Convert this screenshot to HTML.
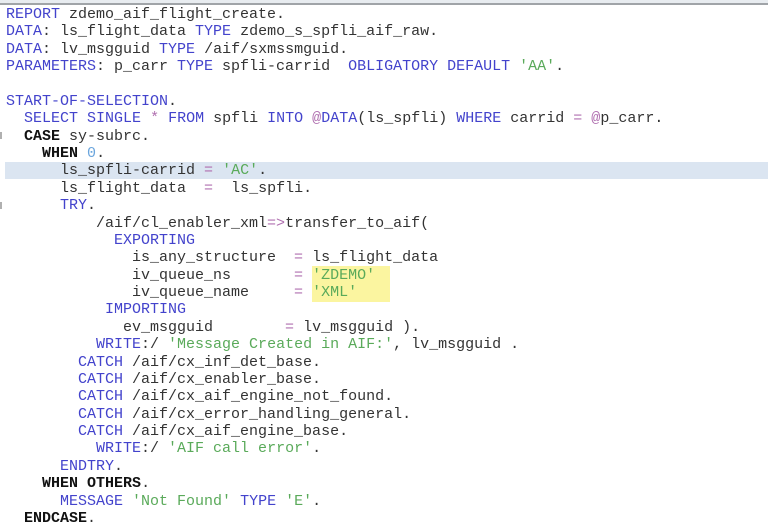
<!DOCTYPE html>
<html><head><meta charset="utf-8"><style>
html,body{margin:0;padding:0;background:#fff;}
body{width:768px;height:530px;overflow:hidden;position:relative;}
.top{position:absolute;left:0;top:0;width:768px;height:3px;background:#e8ecf0;border-bottom:2px solid #a0a4a8;}
pre{position:absolute;left:6px;top:6px;margin:0;font-family:"Liberation Mono",monospace;font-size:15px;line-height:17.38px;color:#333;letter-spacing:0;}
.k{color:#4343cc}
.s{color:#5aaa5a}
.o{color:#b070b0;font-weight:normal}
.n{color:#6aa5dd}
.b{font-weight:bold;color:#111}
.hl{position:absolute;left:5px;top:162px;width:763px;height:17px;background:#dbe5f1;}
.y1{position:absolute;left:312px;top:266px;width:78px;height:36px;background:#fbf5a0;}
.m{position:absolute;left:0;width:2px;height:7px;background:#b0b0b0;}
</style></head><body>
<div class="top"></div>
<div class="hl"></div>
<div class="y1"></div>
<div class="m" style="top:132px"></div>
<div class="m" style="top:202px"></div>
<pre><span class="k">REPORT</span> zdemo_aif_flight_create.
<span class="k">DATA</span>: ls_flight_data <span class="k">TYPE</span> zdemo_s_spfli_aif_raw.
<span class="k">DATA</span>: lv_msgguid <span class="k">TYPE</span> /aif/sxmssmguid.
<span class="k">PARAMETERS</span>: p_carr <span class="k">TYPE</span> spfli-carrid  <span class="k">OBLIGATORY</span> <span class="k">DEFAULT</span> <span class="s">'AA'</span>.

<span class="k">START-OF-SELECTION</span>.
  <span class="k">SELECT</span> <span class="k">SINGLE</span> <span class="o">*</span> <span class="k">FROM</span> spfli <span class="k">INTO</span> <span class="o">@</span><span class="k">DATA</span>(ls_spfli) <span class="k">WHERE</span> carrid <span class="o">=</span> <span class="o">@</span>p_carr.
  <span class="b">CASE</span> sy-subrc.
    <span class="b">WHEN</span> <span class="n">0</span>.
      ls_spfli-carrid <span class="o">=</span> <span class="s">'AC'</span>.
      ls_flight_data  <span class="o">=</span>  ls_spfli.
      <span class="k">TRY</span>.
          /aif/cl_enabler_xml<span class="o">=&gt;</span>transfer_to_aif(
            <span class="k">EXPORTING</span>
              is_any_structure  <span class="o">=</span> ls_flight_data
              iv_queue_ns       <span class="o">=</span> <span class="s">'ZDEMO'</span>
              iv_queue_name     <span class="o">=</span> <span class="s">'XML'</span>
           <span class="k">IMPORTING</span>
             ev_msgguid        <span class="o">=</span> lv_msgguid ).
          <span class="k">WRITE</span>:/ <span class="s">'Message Created in AIF:'</span>, lv_msgguid .
        <span class="k">CATCH</span> /aif/cx_inf_det_base.
        <span class="k">CATCH</span> /aif/cx_enabler_base.
        <span class="k">CATCH</span> /aif/cx_aif_engine_not_found.
        <span class="k">CATCH</span> /aif/cx_error_handling_general.
        <span class="k">CATCH</span> /aif/cx_aif_engine_base.
          <span class="k">WRITE</span>:/ <span class="s">'AIF call error'</span>.
      <span class="k">ENDTRY</span>.
    <span class="b">WHEN</span> <span class="b">OTHERS</span>.
      <span class="k">MESSAGE</span> <span class="s">'Not Found'</span> <span class="k">TYPE</span> <span class="s">'E'</span>.
  <span class="b">ENDCASE</span>.</pre>
</body></html>
